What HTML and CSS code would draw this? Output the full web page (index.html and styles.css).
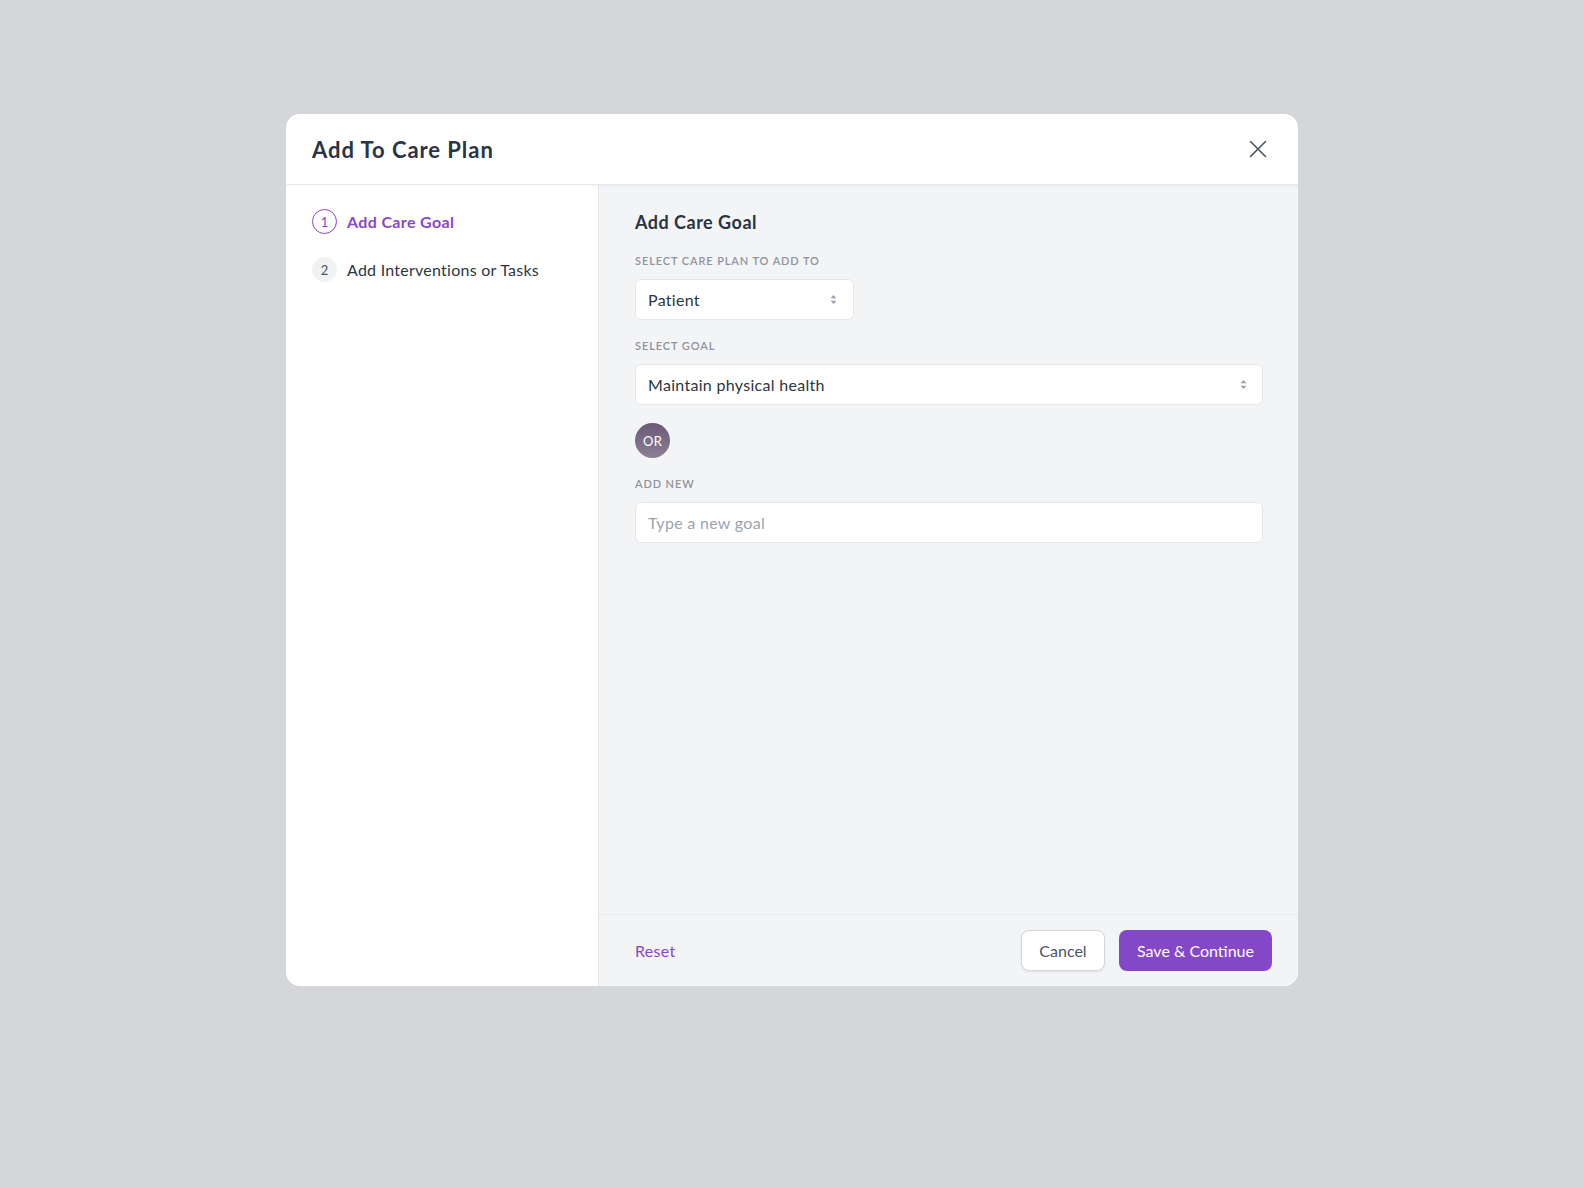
FILE: index.html
```html
<!DOCTYPE html>
<html lang="en">
<head>
<meta charset="utf-8">
<title>Add To Care Plan</title>
<link rel="stylesheet" href="styles.css">
</head>
<body>
<div class="page">
  <div class="modal">
    <header class="modal-header">
      <h1 class="modal-title">Add To Care Plan</h1>
      <button class="close-btn" aria-label="Close">
        <svg width="18" height="18" viewBox="0 0 18 18"><path d="M1.5 1.5 L16.5 16.5 M16.5 1.5 L1.5 16.5" stroke="#4b5563" stroke-width="1.6" stroke-linecap="round" fill="none"/></svg>
      </button>
    </header>
    <div class="modal-body">
      <aside class="sidebar">
        <div class="step step-active">
          <span class="step-num">1</span>
          <span class="step-label">Add Care Goal</span>
        </div>
        <div class="step">
          <span class="step-num">2</span>
          <span class="step-label">Add Interventions or Tasks</span>
        </div>
      </aside>
      <section class="main">
        <div class="content">
          <h2 class="section-title">Add Care Goal</h2>
          <div class="field">
            <div class="field-label">SELECT CARE PLAN TO ADD TO</div>
            <div class="select select-small">
              <span>Patient</span>
              <svg class="chev" width="7" height="11" viewBox="0 0 7 11"><path d="M0.5 4.3 L3.5 1 L6.5 4.3 Z M0.5 6.7 L3.5 10 L6.5 6.7 Z" fill="#9ca3af"/></svg>
            </div>
          </div>
          <div class="field">
            <div class="field-label">SELECT GOAL</div>
            <div class="select">
              <span>Maintain physical health</span>
              <svg class="chev" width="7" height="11" viewBox="0 0 7 11"><path d="M0.5 4.3 L3.5 1 L6.5 4.3 Z M0.5 6.7 L3.5 10 L6.5 6.7 Z" fill="#9ca3af"/></svg>
            </div>
          </div>
          <div class="or-badge">OR</div>
          <div class="field">
            <div class="field-label">ADD NEW</div>
            <div class="input"><span class="placeholder">Type a new goal</span></div>
          </div>
        </div>
        <footer class="footer">
          <a class="reset">Reset</a>
          <div class="actions">
            <button class="btn btn-cancel">Cancel</button>
            <button class="btn btn-primary">Save &amp; Continue</button>
          </div>
        </footer>
      </section>
    </div>
  </div>
</div>
</body>
</html>
```

FILE: styles.css
```css
* { box-sizing: border-box; }
html, body { margin: 0; padding: 0; }
body {
  background: #d5d6da;
  font-family: "Lato", "Noto Sans", sans-serif;
  color: #2d3644;
  width: 1584px;
  height: 1188px;
}
.page {
  padding-top: 114px;
  padding-left: 286px;
}
.modal {
  width: 1012px;
  height: 872px;
  background: #fff;
  border-radius: 14px;
  overflow: hidden;
  display: flex;
  flex-direction: column;
}
.modal-header {
  height: 71px;
  flex: none;
  display: flex;
  align-items: center;
  justify-content: space-between;
  padding: 0 31px 0 26px;
  border-bottom: 1px solid #e7e8ec;
  box-shadow: 0 1px 3px rgba(0,0,0,0.04);
  position: relative;
  z-index: 1;
}
.modal-title {
  margin: 0;
  font-size: 22px;
  font-weight: 700;
  color: #2b3443;
  letter-spacing: 0.95px;
}
.close-btn {
  border: 0;
  background: none;
  padding: 0;
  width: 18px;
  height: 18px;
  display: flex;
  cursor: pointer;
}
.modal-body {
  flex: 1;
  display: flex;
  min-height: 0;
}
.sidebar {
  width: 313px;
  flex: none;
  border-right: 1px solid #e7e8ec;
  padding: 24px 26px;
  display: flex;
  flex-direction: column;
  gap: 23px;
}
.step {
  display: flex;
  align-items: center;
  gap: 10px;
  height: 25px;
  font-size: 16px;
  color: #2d3644;
  letter-spacing: 0.25px;
}
.step-num {
  width: 25px;
  height: 25px;
  border-radius: 50%;
  display: flex;
  align-items: center;
  justify-content: center;
  font-size: 13px;
  background: #f1f2f4;
  color: #4b5563;
  letter-spacing: 0;
}
.step-active .step-num {
  background: #fff;
  border: 1.5px solid #8b46d0;
  color: #8b46d0;
}
.step-active .step-label {
  color: #8b46d0;
  font-weight: 700;
  letter-spacing: 0.35px;
}
.main {
  flex: 1;
  background: #f3f4f6;
  display: flex;
  flex-direction: column;
}
.content {
  flex: 1;
  padding: 25px 35px 0 36px;
}
.section-title {
  margin: 0 0 19px;
  font-size: 18px;
  line-height: 24px;
  font-weight: 700;
  color: #2b3443;
  letter-spacing: 0.5px;
}
.field { margin-bottom: 18px; }
.field-label {
  font-size: 11px;
  line-height: 16px;
  letter-spacing: 0.9px;
  color: #8e939c;
  font-weight: 600;
  margin-bottom: 10px;
}
.select, .input {
  height: 41px;
  background: #fff;
  border: 1px solid #e6e7eb;
  border-radius: 6px;
  display: flex;
  align-items: center;
  justify-content: space-between;
  padding: 0 15px 0 12px;
  font-size: 16px;
  color: #2d3644;
  letter-spacing: 0.3px;
}
.select-small {
  width: 219px;
  padding-right: 16px;
}
.chev { flex: none; }
.placeholder { color: #9ca3af; }
.or-badge {
  width: 35px;
  height: 35px;
  border-radius: 50%;
  background: linear-gradient(180deg, #6c5977 0%, #8c7f94 100%);
  color: #fff;
  font-size: 13px;
  display: flex;
  align-items: center;
  justify-content: center;
  margin-bottom: 18px;
  letter-spacing: 0.3px;
}
.footer {
  height: 72px;
  flex: none;
  border-top: 1px solid #e8e9ed;
  display: flex;
  align-items: center;
  justify-content: space-between;
  padding: 0 26px 0 36px;
}
.reset {
  color: #8b46d0;
  font-size: 16px;
  cursor: pointer;
  letter-spacing: 0.3px;
}
.actions {
  display: flex;
  gap: 14px;
}
.btn {
  height: 41px;
  border-radius: 8px;
  font-family: inherit;
  font-size: 16px;
  cursor: pointer;
  padding: 0;
}
.btn-cancel {
  width: 84px;
  background: #fff;
  border: 1px solid #d3d5da;
  color: #4b5563;
  box-shadow: 0 1px 2px rgba(0,0,0,0.08);
}
.btn-primary {
  width: 153px;
  background: #8447c8;
  border: 0;
  color: #fff;
}
```
